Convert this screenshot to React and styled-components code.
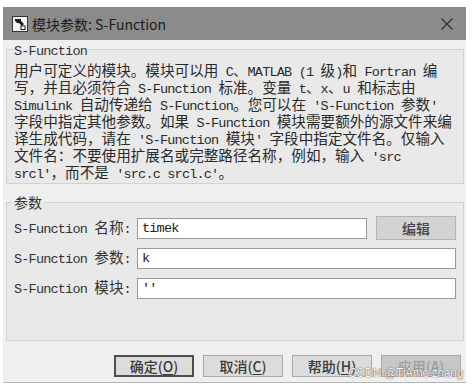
import React from "react";
import styled, { createGlobalStyle } from "styled-components";

const GlobalStyle = createGlobalStyle`
  html, body {
    margin: 0;
    padding: 0;
    background: #fff;
  }
  body {
    font-family: "Noto Sans CJK SC", sans-serif;
    color: #2e2e2e;
  }
`;

const Dialog = styled.div`
  position: relative;
  width: 463px;
  height: 376px;
  margin: 7px 0 0 3px;
  box-sizing: border-box;
  display: flex;
  flex-direction: column;
  background: #efefef;
  border-bottom: 1px solid #b4b4b4;
`;

const TitleBar = styled.div`
  height: 33px;
  flex: none;
  display: flex;
  align-items: center;
  gap: 4px;
  padding: 0 13px 0 9px;
  background: #8b8b8b;
  color: #1c1c1c;
  font-size: 14px;
`;

const TitleText = styled.span`
  flex: 1;
  line-height: 18px;
`;

const Body = styled.div`
  flex: 1;
  display: flex;
  flex-direction: column;
  padding: 0 2px 0 3px;
`;

const Group = styled.fieldset`
  margin: ${(p) => p.$top}px 0 0;
  padding: 0;
  min-width: 0;
  border: 1px solid #d2d2d2;
  background: #e9e9e9;
`;

const Legend = styled.legend`
  margin-left: 5px;
  padding: 0 2px;
  height: 16px;
  line-height: 16px;
  font-size: 14px;
  color: #333;
`;

const Han = styled.span`
  font-family: "Noto Sans CJK SC", sans-serif;
`;

const Lat = styled.span`
  font-family: "Liberation Mono", monospace;
  font-size: 13.5px;
  letter-spacing: -0.8px;
`;

const Description = styled.div`
  padding: 4px 6px 3px 7px;
  font-size: 14.6px;
  color: #2a2a2a;
`;

const Line = styled.div`
  height: 17px;
  line-height: 17px;
  white-space: pre;
`;

const Params = styled.div`
  display: flex;
  flex-direction: column;
  gap: 6px;
  padding: 6px 7px 40px 7px;
`;

const Row = styled.div`
  height: 24px;
  display: flex;
  align-items: center;
  gap: 9px;
`;

const Label = styled.div`
  width: 123px;
  margin-right: -9px;
  flex: none;
  font-size: 14.6px;
  line-height: 17px;
  white-space: pre;
  color: #333;
`;

const Field = styled.input`
  flex: 1;
  min-width: 0;
  height: 21px;
  box-sizing: border-box;
  margin: 0;
  padding: 0 4px;
  border: 1px solid #9a9a9a;
  background: #fff;
  color: #222;
  font-family: "Liberation Mono", monospace;
  font-size: 13.5px;
  letter-spacing: -0.8px;
  outline: none;
`;

const EditButton = styled.button`
  width: 80px;
  height: 24px;
  flex: none;
  margin: 0;
  padding: 0;
  border: 1px solid #b3b3b3;
  background: #d3d3d3;
  color: #444;
  font-family: "Noto Sans CJK SC", sans-serif;
  font-size: 14px;
  font-weight: 500;
`;

const ButtonBar = styled.div`
  display: flex;
  justify-content: flex-end;
  gap: 9px;
  padding: 14px 3px 5px 0;
`;

const DialogButton = styled.button`
  width: 80px;
  height: 22px;
  margin: 0;
  padding: 0;
  box-sizing: border-box;
  border: ${(p) => (p.$focused ? "2px solid #4e4e4e" : "1px solid #a9a9a9")};
  background: ${(p) => (p.disabled ? "#c7c7c7" : "#dcdcdc")};
  color: ${(p) => (p.disabled ? "#9c9c9c" : "#3a3a3a")};
  font-family: "Noto Sans CJK SC", sans-serif;
  font-size: 14px;
  font-weight: 500;
  line-height: 18px;

  u {
    text-underline-offset: 2px;
  }
`;

const Watermark = styled.div`
  position: absolute;
  right: 3px;
  bottom: 2px;
  font-family: "Liberation Sans", sans-serif;
  font-size: 12px;
  letter-spacing: -0.3px;
  color: #f6f6f6;
  text-shadow: 0 0 1px #5a5a5a, 0 0 1px #5a5a5a;
  pointer-events: none;
`;

const CJK = /([\u2e80-\u9fff\u3000-\u303f\uff00-\uffef]+)/;

function T({ children }) {
  return String(children)
    .split(CJK)
    .filter(Boolean)
    .map((s, i) =>
      CJK.test(s) ? <Han key={i}>{s}</Han> : <Lat key={i}>{s}</Lat>
    );
}

function BlockIcon() {
  return (
    <svg width="16" height="16" viewBox="0 0 16 16">
      <rect x="0.5" y="0.5" width="15" height="15" fill="#f2f2f2" stroke="#333" />
      <path d="M3 3 L9 3 L9 5 L12 8 L10 10 L7 7 L5 7 L3 5 Z" fill="#1a1a1a" />
      <rect x="9" y="10" width="4" height="3.5" fill="#fff" stroke="#1a1a1a" />
    </svg>
  );
}

function CloseIcon() {
  return (
    <svg width="12" height="12" viewBox="0 0 12 12">
      <path d="M0.5 0.5 L11.5 11.5 M11.5 0.5 L0.5 11.5" stroke="#2f2f2f" strokeWidth="1.3" />
    </svg>
  );
}

const descLines = [
  "用户可定义的模块。模块可以用 C、MATLAB (1 级)和 Fortran 编",
  "写，并且必须符合 S-Function 标准。变量 t、x、u 和标志由",
  "Simulink 自动传递给 S-Function。您可以在 'S-Function 参数'",
  "字段中指定其他参数。如果 S-Function 模块需要额外的源文件来编",
  "译生成代码，请在 'S-Function 模块' 字段中指定文件名。仅输入",
  "文件名：不要使用扩展名或完整路径名称，例如，输入 'src",
  "srcl'，而不是 'src.c srcl.c'。",
];

const params = [
  { label: "S-Function 名称:", value: "timek", edit: true },
  { label: "S-Function 参数:", value: "k" },
  { label: "S-Function 模块:", value: "''" },
];

export default function App() {
  return (
    <>
      <GlobalStyle />
      <Dialog>
        <TitleBar>
          <BlockIcon />
          <TitleText>模块参数: S-Function</TitleText>
          <CloseIcon />
        </TitleBar>
        <Body>
          <Group $top={1}>
            <Legend>
              <T>S-Function</T>
            </Legend>
            <Description>
              {descLines.map((line) => (
                <Line key={line}>
                  <T>{line}</T>
                </Line>
              ))}
            </Description>
          </Group>
          <Group $top={10}>
            <Legend>参数</Legend>
            <Params>
              {params.map((p) => (
                <Row key={p.label}>
                  <Label>
                    <T>{p.label}</T>
                  </Label>
                  <Field readOnly value={p.value} />
                  {p.edit && <EditButton type="button">编辑</EditButton>}
                </Row>
              ))}
            </Params>
          </Group>
          <ButtonBar>
            <DialogButton type="button" $focused>
              确定(<u>O</u>)
            </DialogButton>
            <DialogButton type="button">
              取消(<u>C</u>)
            </DialogButton>
            <DialogButton type="button">
              帮助(<u>H</u>)
            </DialogButton>
            <DialogButton type="button" disabled>
              应用(<u>A</u>)
            </DialogButton>
          </ButtonBar>
        </Body>
        <Watermark>CSDN @TiAmo zhang</Watermark>
      </Dialog>
    </>
  );
}
